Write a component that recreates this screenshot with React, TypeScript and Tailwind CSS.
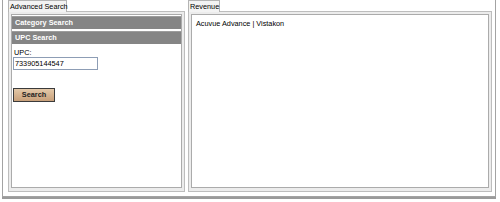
import React from "react";

const Tab = ({ label, width }: { label: string; width: string }) => (
    <div
        className={`${width} h-[12px] -mb-px relative z-10 bg-[#f3f3f3] border-t border-x border-[#b4b4b4] pl-[1px] leading-[11px] text-[7.3px] text-black whitespace-nowrap`}
    >
        {label}
    </div>
);

const SectionBar = ({ title }: { title: string }) => (
    <div className="h-[13px] bg-[#858585] border-t border-[#9c9c9c] pl-[3px] leading-[12px] text-[7.3px] font-bold text-white">
        {title}
    </div>
);

export default function App() {
    return (
        <div className="w-[500px] h-[202px] bg-white font-['Liberation_Sans',Arial,sans-serif] text-black">
            {/* outer frame */}
            <div className="ml-[2px] w-[494px] h-[197px] border-x border-b border-[#a3a3a3] shadow-[0_2px_0_#9a9a9a] flex pl-[5px] gap-[3px]">
                {/* Advanced Search */}
                <div className="w-[177px] flex flex-col">
                    <Tab label="Advanced Search" width="w-[59px]" />
                    <div className="h-[181px] bg-[#ececec] border border-[#bdbdbd] p-[2px] pb-[3px]">
                        <div className="h-full bg-white border border-[#ababab]">
                            <div className="mt-[1px] flex flex-col gap-[2px]">
                                <SectionBar title="Category Search" />
                                <SectionBar title="UPC Search" />
                            </div>
                            <div className="pl-[1px] pt-[4px]">
                                <div className="h-[9px] leading-[9px] text-[7.3px] pl-[1px]">
                                    UPC:
                                </div>
                                <input
                                    type="text"
                                    defaultValue="733905144547"
                                    className="block w-[85px] h-[13px] border border-[#8d9db5] bg-white pl-[1px] text-[7.3px] leading-[11px] text-black outline-none font-['Liberation_Sans',Arial,sans-serif]"
                                />
                                <button className="mt-[18px] block w-[42px] h-[14px] border border-[#3b3b3b] bg-gradient-to-b from-[#e3c8a8] to-[#c8a07a] text-[7.3px] font-bold leading-[12px] text-[#222] font-['Liberation_Sans',Arial,sans-serif]">
                                    Search
                                </button>
                            </div>
                        </div>
                    </div>
                </div>

                {/* Revenue */}
                <div className="w-[304px] flex flex-col">
                    <Tab label="Revenue" width="w-[32px]" />
                    <div className="h-[181px] bg-[#ececec] border border-[#bdbdbd] p-[2px] pb-[3px]">
                        <div className="h-full bg-white border border-[#ababab] pl-[4px] pt-[4px]">
                            <div className="text-[7.3px] leading-[9px]">
                                Acuvue Advance | Vistakon
                            </div>
                        </div>
                    </div>
                </div>
            </div>
        </div>
    );
}
